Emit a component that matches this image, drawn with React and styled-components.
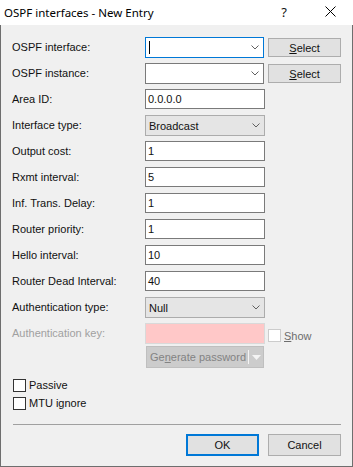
import React from "react";
import styled, { createGlobalStyle } from "styled-components";

const GlobalStyle = createGlobalStyle`
  html, body {
    margin: 0;
    padding: 0;
    background: #f0f0f0;
  }
  * {
    box-sizing: border-box;
  }
`;

const Chevron = () => (
  <svg width="8" height="5" viewBox="0 0 8 5">
    <path d="M0.5 0.5 L4 4 L7.5 0.5" fill="none" stroke="#606060" strokeWidth="1" />
  </svg>
);

const numberRows = [
  ["Output cost:", "1"],
  ["Rxmt interval:", "5"],
  ["Inf. Trans. Delay:", "1"],
  ["Router priority:", "1"],
  ["Hello interval:", "10"],
  ["Router Dead Interval:", "40"],
];

const App = () => {
  return (
    <Window>
      <GlobalStyle />
      <TitleBar>
        <Title>OSPF interfaces - New Entry</Title>
        <TitleBtn>?</TitleBtn>
        <TitleBtn>
          <svg width="11" height="11" viewBox="0 0 11 11">
            <path d="M0.5 0.5 L10.5 10.5 M10.5 0.5 L0.5 10.5" stroke="#000" strokeWidth="1" />
          </svg>
        </TitleBtn>
      </TitleBar>
      <Body>
        <Row>
          <Label $h={21}>OSPF interface:</Label>
          <Combo $focus>
            <Caret />
            <Chevron />
          </Combo>
          <SmallButton>
            <u>S</u>elect
          </SmallButton>
        </Row>
        <Row>
          <Label $h={21}>OSPF instance:</Label>
          <Combo>
            <span />
            <Chevron />
          </Combo>
          <SmallButton>
            <u>S</u>elect
          </SmallButton>
        </Row>
        <Row>
          <Label>Area ID:</Label>
          <TextBox>0.0.0.0</TextBox>
        </Row>
        <Row>
          <Label $h={21}>Interface type:</Label>
          <Combo $list>
            <span>Broadcast</span>
            <Chevron />
          </Combo>
        </Row>
        {numberRows.map(([l, v]) => (
          <Row key={l}>
            <Label>{l}</Label>
            <TextBox>{v}</TextBox>
          </Row>
        ))}
        <Row>
          <Label $h={21}>Authentication type:</Label>
          <Combo $list>
            <span>Null</span>
            <Chevron />
          </Combo>
        </Row>
        <Row $h={23}>
          <Label $h={21} $disabled>
            Authentication key:
          </Label>
          <KeyBox />
          <ShowCheck>
            <Box $disabled />
            <ShowText>
              <u>S</u>how
            </ShowText>
          </ShowCheck>
        </Row>
        <Row $h={33}>
          <Label />
          <GenButton>
            <GenText>
              Ge<u>n</u>erate password
            </GenText>
            <GenArrow>
              <svg width="9" height="5" viewBox="0 0 9 5">
                <path d="M0 0 L9 0 L4.5 5 Z" fill="#f4f4f4" />
              </svg>
            </GenArrow>
          </GenButton>
        </Row>
        <CheckRow>
          <Box />
          <span>Passive</span>
        </CheckRow>
        <CheckRow>
          <Box />
          <span>MTU ignore</span>
        </CheckRow>
        <Separator />
        <Footer>
          <DialogButton $default>OK</DialogButton>
          <DialogButton>Cancel</DialogButton>
        </Footer>
      </Body>
    </Window>
  );
};

export default App;

const Window = styled.div`
  width: 353px;
  height: 467px;
  display: flex;
  flex-direction: column;
  font-family: "Liberation Sans", Arial, sans-serif;
  font-size: 11px;
  color: #111;
`;

const TitleBar = styled.div`
  height: 25px;
  background: #ffffff;
  display: flex;
  align-items: center;
  padding-left: 4px;
`;

const Title = styled.div`
  flex: 1;
  font-family: "Noto Sans", "Open Sans", sans-serif;
  font-size: 11.5px;
  color: #000;
  padding-bottom: 1px;
`;

const TitleBtn = styled.div`
  width: 46px;
  height: 25px;
  display: flex;
  align-items: center;
  justify-content: center;
  font-family: "Noto Sans", sans-serif;
  font-size: 13px;
  padding-bottom: 2px;
`;

const Body = styled.div`
  flex: 1;
  background: #f0f0f0;
  border: 1px solid #6e6e6e;
  border-top: none;
  padding: 12px 11px 0 11px;
  display: flex;
  flex-direction: column;
`;

const Row = styled.div`
  height: ${(p) => p.$h || 26}px;
  display: flex;
  align-items: flex-start;
`;

const Label = styled.div`
  width: 133px;
  height: ${(p) => p.$h || 20}px;
  line-height: ${(p) => p.$h || 20}px;
  color: ${(p) => (p.$disabled ? "#a0a0a0" : "inherit")};
  white-space: nowrap;
`;

const TextBox = styled.div`
  width: 120px;
  height: 20px;
  background: #fff;
  border: 1px solid #7a7a7a;
  line-height: 18px;
  padding-left: 2px;
`;

const Combo = styled.div`
  width: 120px;
  height: 21px;
  background: ${(p) => (p.$list ? "#e5e5e5" : "#fff")};
  border: 1px solid
    ${(p) => (p.$focus ? "#0078d7" : p.$list ? "#acacac" : "#7a7a7a")};
  display: flex;
  align-items: center;
  justify-content: space-between;
  padding: 0 4px 0 3px;
`;

const Caret = styled.span`
  width: 1px;
  height: 13px;
  background: #000;
`;

const SmallButton = styled.div`
  width: 73px;
  height: 19px;
  margin-left: 4px;
  margin-top: 1px;
  background: #e1e1e1;
  border: 1px solid #adadad;
  display: flex;
  align-items: center;
  justify-content: center;
`;

const KeyBox = styled.div`
  width: 120px;
  height: 21px;
  background: #ffc8c8;
  border: 1px solid #d9d9d9;
`;

const ShowCheck = styled.div`
  display: flex;
  align-items: center;
  gap: 3px;
  margin-left: 3px;
  margin-top: 6px;
`;

const Box = styled.span`
  width: 13px;
  height: 13px;
  background: #fff;
  border: 1px solid ${(p) => (p.$disabled ? "#cccccc" : "#333333")};
  flex-shrink: 0;
`;

const ShowText = styled.span`
  color: #6d6d6d;
`;

const GenButton = styled.div`
  width: 118px;
  height: 22px;
  margin-left: 1px;
  background: #cccccc;
  border: 1px solid #bfbfbf;
  display: flex;
  align-items: center;
  color: #838383;
  white-space: nowrap;
`;

const GenText = styled.span`
  flex: 1;
  padding-left: 3px;
  border-right: 1px solid #f4f4f4;
  height: 14px;
  line-height: 14px;
`;

const GenArrow = styled.span`
  width: 14px;
  display: flex;
  justify-content: center;
`;

const CheckRow = styled.div`
  height: 18px;
  display: flex;
  align-items: flex-start;
  gap: 3px;
  padding-left: 1px;
  line-height: 13px;
`;

const Separator = styled.div`
  height: 1px;
  background: #a0a0a0;
  margin: 9px 0 9px 1px;
`;

const Footer = styled.div`
  display: flex;
  justify-content: flex-end;
  gap: 9px;
`;

const DialogButton = styled.div`
  width: 73px;
  height: 22px;
  background: #e1e1e1;
  border: ${(p) => (p.$default ? "2px solid #0078d7" : "1px solid #adadad")};
  display: flex;
  align-items: center;
  justify-content: center;
`;
